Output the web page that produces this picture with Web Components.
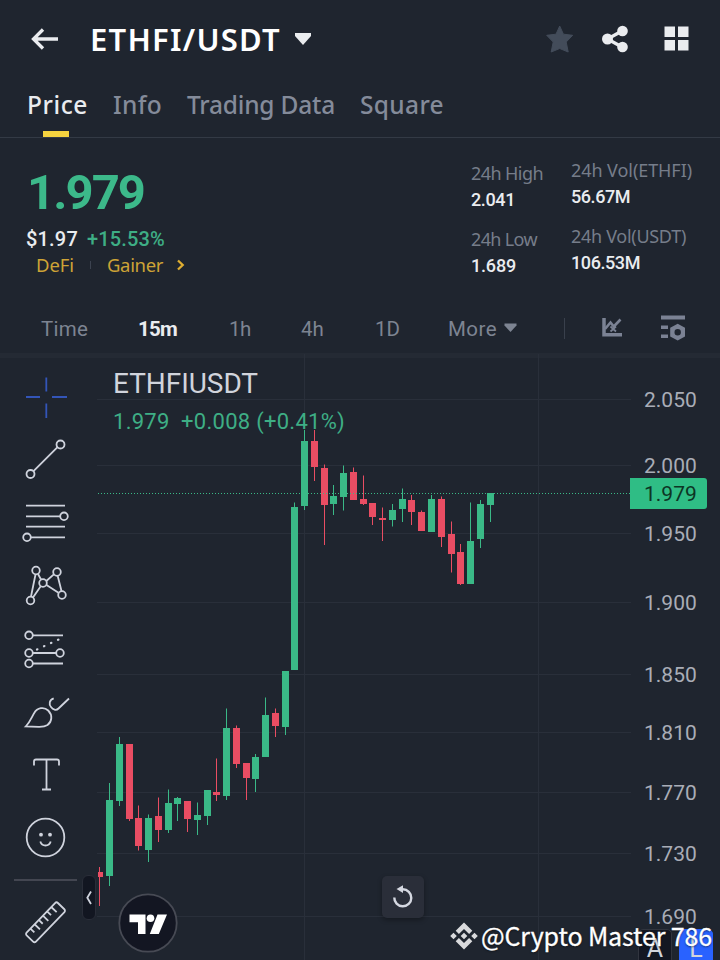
<!DOCTYPE html>
<html lang="en">
<head>
<meta charset="utf-8">
<title>ETHFI/USDT</title>
<style>
    html, body {
        margin: 0;
        background: #1f252f;
    }
    body {
        width: 720px;
        height: 960px;
        overflow: hidden;
    }
</style>
</head>
<body>
<trade-screen></trade-screen>

<script>
// Text run that spreads its letters over a fixed width
class FitText extends HTMLElement {
    constructor() {
        super();
        this.attachShadow({ mode: 'open' });
        this.shadowRoot.innerHTML = `<style>
                :host { display: inline-block; white-space: pre; flex: none; }
            </style><span><slot></slot></span>`;
    }

    connectedCallback() {
        const width = parseFloat(this.getAttribute('w'));
        const natural = this.shadowRoot.querySelector('span').getBoundingClientRect().width;
        this.style.width = `${width}px`;
        this.style.letterSpacing = `${(width - natural) / this.textContent.length}px`;
    }
}

class PairHeader extends HTMLElement {
    constructor() {
        super();
        this.attachShadow({ mode: 'open' });
        this.shadowRoot.innerHTML = `
            <style>
                :host {
                    display: flex;
                    align-items: center;
                    height: 78px;
                    padding: 0 31px;
                    box-sizing: border-box;
                    font: 600 31px/78px "Noto Sans", sans-serif;
                    color: #fff;
                }
                svg { flex: none; display: block; fill: #eaecef; margin-top: -1px; }
                .title { margin-left: 29px; }
                .caret { margin-left: 14px; }
                .star { margin-left: auto; }
                .share { margin: -1px 36px 0 28px; }
            </style>
            <svg width="30" height="24" viewBox="0 0 30 24"><path d="M12 2.500 2.500 12l9.500 9.500M3 12H27" fill="none" stroke="#eaecef" stroke-width="3.300"/></svg>
            <fit-text class="title" w="191">ETHFI/USDT</fit-text>
            <svg class="caret" width="17" height="14" viewBox="0 0 17 14"><path d="M0 1h16v3L8 13 0 4z"/></svg>
            <svg class="star" width="28" height="28" viewBox="0 0 28 28"><path d="M13.700 1l3.700 8.200 9.300 1.100-6.500 6.700 2 10-8.500-3.500L5.200 27l2-10L.7 10.300 10 9.200z" fill="#434c5a" stroke="#434c5a" stroke-linejoin="round"/></svg>
            <svg class="share" width="26" height="28" viewBox="0 0 26 28"><circle cx="5.500" cy="14" r="5.500"/><circle cx="20.500" cy="6" r="5.300"/><circle cx="20.500" cy="22" r="5.300"/><path d="M20 6 5.500 14 20 22" fill="none" stroke="#eaecef" stroke-width="3.300"/></svg>
            <svg width="25" height="25" viewBox="0 0 25 25"><path d="M.5.500h10.500v10.500H.5zM14 .5h10.500v10.500H14zM.5 14h10.500v10.500H.5zM14 14h10.500v10.500H14z"/></svg>
        `;
    }
}

class NavTabs extends HTMLElement {
    constructor() {
        super();
        this.attachShadow({ mode: 'open' });
        this.shadowRoot.innerHTML = `
            <style>
                :host {
                    display: flex;
                    gap: 25px;
                    height: 60px;
                    padding-left: 27px;
                    box-sizing: border-box;
                    border-bottom: 1px solid #333a45;
                }
            </style>
            <slot></slot>
        `;
    }
}

class NavTab extends HTMLElement {
    constructor() {
        super();
        this.attachShadow({ mode: 'open' });
        this.shadowRoot.innerHTML = `
            <style>
                :host {
                    display: flex;
                    flex-direction: column;
                    align-items: center;
                    font: 500 24.5px/53px "Noto Sans", sans-serif;
                    color: #848b9a;
                }
                :host([active]) { color: #eaecef; }
                :host([active])::after {
                    content: "";
                    width: 26px;
                    height: 6px;
                    margin-right: 3px;
                    background: #f5d33f;
                }
            </style>
            <slot></slot>
        `;
    }
}

class TickerStats extends HTMLElement {
    constructor() {
        super();
        this.attachShadow({ mode: 'open' });
        this.shadowRoot.innerHTML = `
            <style>
                :host {
                    display: grid;
                    grid-template-columns: 471px 100px 1fr;
                    height: 165px;
                    font-family: Roboto, sans-serif;
                    color: #eaecef;
                }
                .left { padding: 25px 0 0 26px; }
                .price { display: block; margin-left: 1px; font-weight: 700; font-size: 49px; line-height: 60px; color: #3cb98a; }
                .row { display: flex; align-items: center; font: 500 20px/33px Roboto, sans-serif; }
                .row .up { margin-left: 9px; color: #3eae85; }
                .tags { font: 400 18.500px/20px "Noto Sans", sans-serif; color: #cda336; padding-left: 10px; margin-top: -1px; }
                .tags i { width: 1px; height: 8px; margin: 0 16px; background: #3c4350; }
                .tags svg { margin-left: 14px; }
                .col { padding-top: 23px; font: 500 18px/26px Roboto, sans-serif; }
                .col + .col { padding-top: 20px; }
                .label { font: 400 18px/24px "Noto Sans", sans-serif; padding-bottom: 2px; color: #767d8a; }
                .col div:nth-child(2) { margin-bottom: 14px; }
            </style>
            <div class="left">
                <fit-text class="price" w="117">1.979</fit-text>
                <div class="row"><fit-text w="52">$1.97</fit-text><fit-text class="up" w="78">+15.53%</fit-text></div>
                <div class="row tags">
                    <fit-text w="38">DeFi</fit-text><i></i><fit-text w="56">Gainer</fit-text>
                    <svg width="8" height="12" viewBox="0 0 8 12"><path d="M1 1.500 5.700 6 1 10.500" fill="none" stroke="#dfae31" stroke-width="2.300"/></svg>
                </div>
            </div>
            <div class="col">
                <div class="label"><fit-text w="72">24h High</fit-text></div>
                <div><fit-text w="44">2.041</fit-text></div>
                <div class="label"><fit-text w="66">24h Low</fit-text></div>
                <div><fit-text w="45">1.689</fit-text></div>
            </div>
            <div class="col">
                <div class="label"><fit-text w="121">24h Vol(ETHFI)</fit-text></div>
                <div><fit-text w="59">56.67M</fit-text></div>
                <div class="label"><fit-text w="115">24h Vol(USDT)</fit-text></div>
                <div><fit-text w="69">106.53M</fit-text></div>
            </div>
        `;
    }
}

class IntervalBar extends HTMLElement {
    constructor() {
        super();
        this.attachShadow({ mode: 'open' });
        this.shadowRoot.innerHTML = `
            <style>
                :host {
                    display: flex;
                    align-items: center;
                    height: 55px;
                    padding: 0 34px 0 41px;
                    box-sizing: border-box;
                    border-bottom: 5px solid #242a34;
                    font: 400 20.500px/50px Roboto, sans-serif;
                    color: #7d8492;
                }
                fit-text { padding-top: 2px; }
                b { font-weight: 700; color: #eaecef; margin: 0 52px 0 50px; }
                svg { display: block; flex: none; }
                .h4 { margin: 0 51px 0 50px; }
                .more { margin-left: 48px; }
                .rule { width: 1px; height: 21px; margin: 0 36px 0 47px; background: #39404c; }
            </style>
            <fit-text w="47">Time</fit-text>
            <b><fit-text w="39">15m</fit-text></b>
            <fit-text w="22">1h</fit-text>
            <fit-text class="h4" w="23">4h</fit-text>
            <fit-text w="25">1D</fit-text>
            <fit-text class="more" w="49">More</fit-text>
            <svg width="13" height="10" viewBox="0 0 13 10" style="margin: -1px 0 0 7px"><path d="M.5.500h12v2L6.500 9 .5 2.500z" fill="#7d8492"/></svg>
            <div class="rule"></div>
            <svg width="22" height="22" viewBox="0 0 22 22" style="margin-top: -2px" fill="none" stroke="#7b8294" stroke-width="2.600"><path d="M3 2v16.700h18" stroke-width="3.500"/><path d="m4 13 5.500-6.500 3.300 4L19.500 3.500"/><path d="m9.500 10.500 5.500 5M15 10.500l-5.500 5" stroke-width="1.700"/></svg>
            <svg width="26" height="26" viewBox="0 0 26 26" style="margin-left: auto" fill="#7b8294"><path d="M1 .5h24v4H1zM1 10.500h7v3.500H1zM1 19.500h7V23H1z"/><path fill-rule="evenodd" d="m17.700 8.800 7.300 4v8.700l-7.300 4-7.500-4v-8.700zM17.700 14a3.200 3.200 0 1 0 0 6.400 3.200 3.200 0 0 0 0-6.400z"/></svg>
        `;
    }
}

class DrawingTools extends HTMLElement {
    constructor() {
        super();
        this.attachShadow({ mode: 'open' });
        this.shadowRoot.innerHTML = `
            <style>
                :host {
                    display: flex;
                    flex-direction: column;
                    padding-top: 8px;
                    position: relative;
                }
                svg {
                    display: block;
                    flex: none;
                    fill: none;
                    stroke: #cfd3dd;
                    stroke-width: 1.8;
                }
                hr { flex: none; width: 63px; height: 2px; margin: 9px 0 10px 14px; border: 0; background: #434651; }
                .handle {
                    position: absolute;
                    left: 82px;
                    top: 517px;
                    width: 14px;
                    height: 45px;
                    border-radius: 6px;
                    background: #121621;
                    border: 1px solid #292d38;
                    box-sizing: border-box;
                }
            </style>
            <svg width="97" height="63"><path d="M26 31h14M52 31h15M46.300 11.500v14M46.300 37.500v14.500" stroke="#3355b8"/></svg>
            <svg width="97" height="63"><circle cx="30.500" cy="45" r="4"/><circle cx="60.500" cy="15.500" r="4"/><path d="m33.500 42.200 24-24"/></svg>
            <svg width="97" height="63"><path d="M26 13.700h39M26 24.300h34M26 34.700h39M31 45.300h34"/><circle cx="64" cy="24.300" r="3.800"/><circle cx="27" cy="45.300" r="3.800"/></svg>
            <svg width="97" height="63"><circle cx="36" cy="15.500" r="3.800"/><circle cx="57" cy="17" r="3.800"/><circle cx="43" cy="28" r="3.800"/><circle cx="30.500" cy="45.500" r="3.800"/><circle cx="62" cy="40" r="3.800"/><path d="m31 41.500 4.500-22M38 19l3 5.500M33 42.500l7.700-11.300M46.300 26l7.500-6.700M46.500 30l12 7.700M57.700 21l3.800 15"/></svg>
            <svg width="97" height="63"><circle cx="29" cy="17.300" r="3.800"/><circle cx="29" cy="35" r="3.800"/><circle cx="60" cy="35" r="3.800"/><circle cx="29" cy="45.500" r="3.800"/><path d="M33 17.300h30M33 35h23M33 45.500h30"/><path d="M37 31.500 62 20" stroke-width="2.200" stroke-linecap="round" stroke-dasharray=".5 7.200"/></svg>
            <svg width="97" height="63"><path d="M25.700 45.500c5-5.500 6-9.500 8.500-13.500 3-5.500 10-6.500 14-2.500 4.500 4.500 4 11-.7 14.500-3 2-6 1.800-9 1.800zM53.700 17.300c-4.500 1.700-5 5.700-2.700 8.700 2 2.700 5 4 7.500 1.500l10.500-10"/></svg>
            <svg width="97" height="63"><path d="M34 21.500v-4q0-2 2-2h21q2 0 2 2v4M46.500 16v29.500M42 45.500h9"/></svg>
            <svg width="97" height="63"><circle cx="45.500" cy="30.500" r="18.800"/><path d="M40.300 34.500q1.200 4 5.200 4t5.200-4"/><g fill="#cfd3dd" stroke="none"><circle cx="41" cy="27.700" r="1.900"/><circle cx="50" cy="27.700" r="1.900"/></g></svg>
            <hr>
            <svg width="97" height="63"><g transform="translate(45.500 31.300) rotate(-46)"><rect x="-22.500" y="-6.500" width="45" height="13" rx="2"/><path d="M-15-6.500V-1M-9-6.500v7.500M-3-6.500V-1M3-6.500v7.500M9-6.500V-1M15-6.500v7.500"/></g></svg>
            <div class="handle"><svg width="12" height="43"><path d="m8 15.500-3.700 6.200L8 28"/></svg></div>
        `;
    }
}

// [x, open/close top, bottom, wick top, wick bottom, up], chart pixels
const candles = [
    [96, 872, 877, 867, 906, 0], [106, 800, 876, 783, 886, 1], [116, 744, 801, 737, 806, 1],
    [126, 744, 819, 744, 821, 0], [135, 818, 846, 805.5, 850.5, 0], [145, 818, 850, 814.5, 862, 1],
    [155, 816, 830, 797.5, 842, 0], [165, 803, 830, 789.5, 833, 1], [174, 798, 804, 797, 821, 1],
    [184, 801, 819, 801, 832, 0], [194, 815, 820, 802.5, 835, 1], [204, 790, 816, 790, 825, 1],
    [213, 792, 795, 758.5, 801, 0], [223, 728, 796, 708.5, 800, 1], [233, 728, 764, 725.5, 768, 0],
    [243, 763, 778, 763, 800, 0], [252, 757, 779, 754, 792, 1], [262, 715, 757, 697.5, 757, 1],
    [272, 713, 726, 708.5, 737, 0], [282, 671, 727, 671, 735, 1], [291, 507, 670, 502.5, 670, 1],
    [301, 441, 506, 430, 510, 1], [311, 441, 467, 430, 481, 0], [321, 468, 505, 464.5, 545, 0],
    [330, 496, 504, 485, 515, 1], [340, 473, 497, 465.5, 510.5, 1], [350, 472, 500, 467.5, 500, 0],
    [360, 499, 504, 475.5, 505, 0], [369, 503, 517, 503, 525, 0], [379, 518, 520, 507.5, 541, 0],
    [389, 510, 520, 504, 526.5, 1], [399, 499, 509, 488.5, 522, 1], [408, 500, 512, 495, 525, 0],
    [418, 512, 531, 510.5, 531, 0], [428, 499, 532, 495, 532, 1], [438, 499, 537, 496.5, 547, 0],
    [448, 534, 554, 521.5, 572.5, 0], [457, 552, 584, 544, 585, 0], [467, 541, 584, 502.5, 584, 1],
    [477, 504, 539, 500, 548, 1], [487, 493, 505, 493, 522, 1]
];

const ticks = [
    ['2.050', 399], ['2.000', 465], ['1.950', 533], ['1.900', 602], ['1.850', 674],
    ['1.810', 732], ['1.770', 792], ['1.730', 853], ['1.690', 916]
];

class CandleChart extends HTMLElement {
    constructor() {
        super();
        this.attachShadow({ mode: 'open' });
        const bars = candles.map(([x, top, bottom, high, low, up]) => {
            const left = Math.max(x, 98);
            return `<g fill="${up ? '#3ab987' : '#e94d63'}">
                <rect x="${x + 3}" y="${high}" width="1" height="${low - high}"/>
                <rect x="${left}" y="${top}" width="${x + 7 - left}" height="${bottom - top}"/></g>`;
        }).join('');
        const lines = ticks.map(([, y]) => `<path d="M97 ${y + 0.5}H631"/>`).join('');

        this.shadowRoot.innerHTML = `
            <style>
                :host { display: block; position: relative; font-family: Roboto, sans-serif; }
                .plot { display: block; overflow: visible; }
                .legend { position: absolute; left: 16px; top: 9px; }
                .symbol { font-size: 28px; line-height: 34px; color: #d1d4dc; }
                .values { font-size: 22px; line-height: 42px; color: #3eae85; }
                .reset {
                    position: absolute;
                    left: 285px;
                    top: 518px;
                    width: 42px;
                    height: 42px;
                    border-radius: 5px;
                    background: #2a2e39;
                    box-shadow: 0 2px 5px #0005;
                }
                .logo { position: absolute; left: 20px; top: 534px; }
            </style>
            <svg class="plot" width="533" height="602" viewBox="97 358 533 602">
                <g stroke="#292f3a">${lines}<path d="M304.500 354V960M538.500 354V960"/></g>
                ${bars}
                <path d="M98 493.500H630" stroke="#3ab987" stroke-dasharray="1 2"/>
            </svg>
            <div class="legend">
                <div class="symbol"><fit-text w="145">ETHFIUSDT</fit-text></div>
                <div class="values"><fit-text w="232">1.979  +0.008 (+0.41%)</fit-text></div>
            </div>
            <div class="reset">
                <svg width="42" height="42" fill="none" stroke="#d5d8e1" stroke-width="2.400"><path d="M12.300 21.500a8.500 8.500 0 1 0 8.500-8.200h-2"/><path d="m14.500 13 6.500-3.700v7.700z" fill="#d5d8e1" stroke="none"/></svg>
            </div>
            <svg class="logo" width="62" height="62" viewBox="0 0 62 62"><circle cx="31" cy="31" r="28.700" fill="#131622" stroke="#474a54" stroke-width="1.800"/><g fill="#fff"><path d="M12.500 22.500H28.500V42H21V30.200H12.500zM40.500 22.500H50L41.800 42H32.800z"/><circle cx="33.500" cy="26.300" r="3.800"/></g></svg>
        `;
    }
}

class PriceAxis extends HTMLElement {
    constructor() {
        super();
        this.attachShadow({ mode: 'open' });
        const labels = ticks.map(([label, y]) => `<text x="644" y="${y + 8.3}">${label}</text>`).join('');
        this.shadowRoot.innerHTML = `
            <style>
                :host { display: block; position: relative; font: 400 21px Roboto, sans-serif; }
                svg { display: block; }
                text { fill: #a9adb7; }
                .last { fill: #0d3524; }
                .modes {
                    position: absolute;
                    left: 8px;
                    top: 571px;
                    display: flex;
                    gap: 7px;
                    font: 400 25px/38px Roboto, sans-serif;
                    color: #d1d4dc;
                    text-align: center;
                }
                .modes div {
                    width: 32px;
                    height: 38px;
                    border: 1px solid #31353f;
                    border-radius: 5px;
                    background: #131722;
                }
                .modes .on { border-color: #2962ff; background: #2962ff; }
            </style>
            <svg width="90" height="602" viewBox="630 358 90 602">
                ${labels}
                <path d="M630 478H704q3 0 3 3V506q0 3-3 3H630z" fill="#2fbd85"/>
                <text class="last" x="644" y="501.300">1.979</text>
            </svg>
            <div class="modes"><div>A</div><div class="on">L</div></div>
        `;
    }
}

class AuthorMark extends HTMLElement {
    constructor() {
        super();
        this.attachShadow({ mode: 'open' });
        this.shadowRoot.innerHTML = `
            <style>
                :host {
                    position: absolute;
                    left: 450px;
                    top: 917px;
                    display: flex;
                    align-items: center;
                    gap: 3px;
                    font: 400 25px/36px "Noto Sans CJK SC", sans-serif;
                    color: #fff;
                    text-shadow: 0 1px 2px #0008;
                    -webkit-text-stroke: .3px #fff;
                }
                svg { display: block; fill: #d9dadc; margin-top: 2px; }
            </style>
            <svg width="28" height="28" viewBox="0 0 28 28"><path d="m14 .5 8.300 8.300-3.200 3.200L14 6.900 8.900 12 5.700 8.800zM14 27.500l8.300-8.300-3.200-3.200L14 21.100 8.900 16l-3.200 3.200zM3.500 10.700 6.800 14l-3.300 3.300L.2 14zM24.500 10.700l3.300 3.300-3.300 3.300-3.300-3.300zM14 10.700l3.300 3.300-3.300 3.300-3.300-3.300z"/></svg>
            <fit-text w="231">@Crypto Master 786</fit-text>
        `;
    }
}

class TradeScreen extends HTMLElement {
    constructor() {
        super();
        this.attachShadow({ mode: 'open' });
        this.shadowRoot.innerHTML = `
            <style>
                :host {
                    display: flex;
                    flex-direction: column;
                    position: relative;
                    width: 720px;
                    height: 960px;
                    overflow: hidden;
                    background: #1f252f;
                }
                .chart {
                    display: grid;
                    grid-template-columns: 97px 533px 90px;
                    height: 602px;
                }
                drawing-tools { z-index: 1; }
            </style>
            <pair-header></pair-header>
            <nav-tabs>
                <nav-tab active><fit-text w="61">Price</fit-text></nav-tab>
                <nav-tab><fit-text w="49">Info</fit-text></nav-tab>
                <nav-tab><fit-text w="148">Trading Data</fit-text></nav-tab>
                <nav-tab><fit-text w="84">Square</fit-text></nav-tab>
            </nav-tabs>
            <ticker-stats></ticker-stats>
            <interval-bar></interval-bar>
            <div class="chart">
                <drawing-tools></drawing-tools>
                <candle-chart></candle-chart>
                <price-axis></price-axis>
            </div>
            <author-mark></author-mark>
        `;
    }
}

customElements.define('pair-header', PairHeader);
customElements.define('nav-tabs', NavTabs);
customElements.define('nav-tab', NavTab);
customElements.define('ticker-stats', TickerStats);
customElements.define('interval-bar', IntervalBar);
customElements.define('drawing-tools', DrawingTools);
customElements.define('candle-chart', CandleChart);
customElements.define('price-axis', PriceAxis);
customElements.define('author-mark', AuthorMark);
customElements.define('trade-screen', TradeScreen);
// Last, so every run is laid out before it is measured
customElements.define('fit-text', FitText);
</script>
</body>
</html>
